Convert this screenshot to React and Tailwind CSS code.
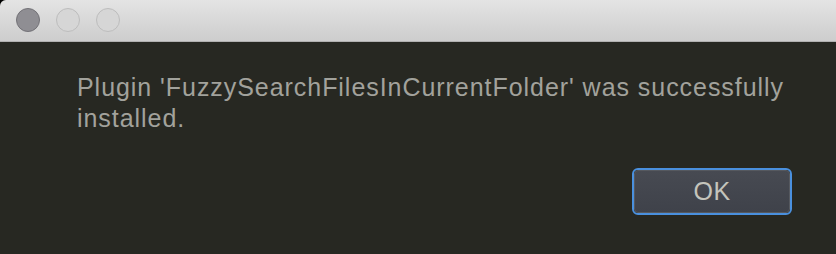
import React from 'react';

const font = { fontFamily: '"Liberation Sans", Arial, sans-serif' };

const Dot = ({ active }) => (
  <div
    className={`w-6 h-6 rounded-full border ${
      active ? 'bg-[#8f8e93] border-[#737277]' : 'bg-[#d6d6d6] border-[#bdbdbd]'
    }`}
  />
);

export default function App() {
  return (
    <div className="w-[836px] h-[254px] bg-black overflow-hidden" style={font}>
      <div className="h-full flex flex-col rounded-tl-[6px] overflow-hidden bg-[#272822]">
        {/* Title bar */}
        <div className="h-[42px] shrink-0 flex items-start gap-4 pl-4 pt-2 bg-gradient-to-b from-[#e4e4e4] to-[#cdcdcd] border-b border-[#b1b1b1]">
          <Dot active />
          <Dot />
          <Dot />
        </div>

        {/* Body */}
        <div className="flex-1 flex flex-col pl-[77px] pr-[40px] pt-[30px]">
          <p className="text-[25px] leading-[31px] text-[#a2a29c] tracking-[0.95px]">
            Plugin 'FuzzySearchFilesInCurrentFolder' was successfully installed.
          </p>
          <div className="flex justify-end mt-[34px] pr-[4px]">
            <button className="w-[160px] h-[47px] rounded-[6px] border-[2px] border-[#4a90de] p-0">
              <div className="w-full h-full rounded-[4px] border border-[#56595f] bg-gradient-to-b from-[#474a52] to-[#3f424a] flex items-center justify-center text-[25px] tracking-[0.5px] text-[#c4c4bc]">
                OK
              </div>
            </button>
          </div>
        </div>
      </div>
    </div>
  );
}
